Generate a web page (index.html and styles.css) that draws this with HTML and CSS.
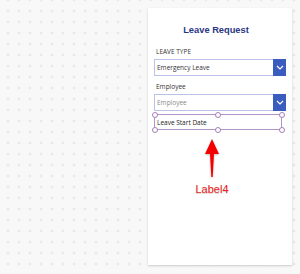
FILE: index.html
```html
<!DOCTYPE html>
<html>
<head>
<meta charset="utf-8">
<link rel="stylesheet" href="styles.css">
</head>
<body>
<div class="card">
  <h1 class="title">Leave Request</h1>
  <div class="label">LEAVE TYPE</div>
  <div class="dropdown">
    <span class="value">Emergency Leave</span>
    <span class="chev"><svg width="8" height="5" viewBox="0 0 8 5"><path d="M1 1 L4 4 L7 1" fill="none" stroke="#fff" stroke-width="1.2"/></svg></span>
  </div>
  <div class="label label-2">Employee</div>
  <div class="dropdown">
    <span class="value placeholder">Employee</span>
    <span class="chev"><svg width="8" height="5" viewBox="0 0 8 5"><path d="M1 1 L4 4 L7 1" fill="none" stroke="#fff" stroke-width="1.2"/></svg></span>
  </div>
  <div class="selected">
    <span class="sel-text">Leave Start Date</span>
    <i class="h tl"></i><i class="h tm"></i><i class="h tr"></i>
    <i class="h bl"></i><i class="h bm"></i><i class="h br"></i>
  </div>
  <div class="annot">
    <svg class="arrow" width="16" height="40" viewBox="0 0 16 40">
      <path d="M8 0 L15 15 L10 15 L8.7 38 L7.3 38 L6 15 L1 15 Z" fill="#f40000"/>
    </svg>
    <div class="annot-text">Label4</div>
  </div>
</div>
</body>
</html>
```
FILE: styles.css
```css
html, body { margin: 0; padding: 0; }
body {
  width: 300px;
  height: 274px;
  overflow: hidden;
  background-color: #f8f8f8;
  background-image: radial-gradient(circle, #dcdcdc 0.8px, transparent 1.3px);
  background-size: 11px 11px;
  background-position: 2.5px -5.5px;
  padding: 8px 0 0 148px;
  box-sizing: border-box;
  font-family: "Open Sans", "Noto Sans", sans-serif;
}
.card {
  width: 144px;
  height: 257px;
  background: #fff;
  box-shadow: 0 1px 2px rgba(0,0,0,0.18);
  padding: 0 6px;
  box-sizing: border-box;
  display: flex;
  flex-direction: column;
}
.title {
  margin: 16px 0 0;
  font-family: "Liberation Sans", Arial, sans-serif;
  font-size: 9.3px;
  font-weight: bold;
  color: #2a3784;
  text-align: center;
  line-height: 12px;
  padding-right: 8px;
}
.label {
  margin-top: 11px;
  font-size: 6.5px;
  line-height: 9px;
  color: #333;
  padding-left: 2px;
}
.label-2 { margin-top: 6px; }
.dropdown {
  margin-top: 3px;
  height: 17px;
  border: 1px solid #b9c3e6;
  box-sizing: border-box;
  display: flex;
  align-items: center;
  justify-content: space-between;
  width: 132px;
}
.value {
  font-size: 6.5px;
  color: #333;
  padding-left: 2px;
}
.placeholder { color: #8a8a8a; }
.chev {
  width: 13px;
  height: 17px;
  margin: -1px -1px -1px 0;
  background: #3a5cbf;
  display: flex;
  align-items: center;
  justify-content: center;
}
.selected {
  position: relative;
  margin-top: 3px;
  width: 128px;
  height: 16px;
  border: 1px solid #b594c7;
  box-sizing: border-box;
  display: flex;
  align-items: center;
}
.sel-text {
  font-size: 6.5px;
  color: #222;
  padding-left: 2px;
}
.h {
  position: absolute;
  width: 4px;
  height: 4px;
  border: 1px solid #a57db9;
  border-radius: 50%;
  background: #fff;
}
.tl { left: -3.5px; top: -3.5px; }
.tm { left: 59.5px; top: -3.5px; }
.tr { right: -3.5px; top: -3.5px; }
.bl { left: -3.5px; bottom: -3.5px; }
.bm { left: 59.5px; bottom: -3.5px; }
.br { right: -3.5px; bottom: -3.5px; }
.annot {
  display: flex;
  flex-direction: column;
  align-items: center;
  margin-top: 9px;
  width: 116px;
}
.arrow {
  display: block;
  filter: drop-shadow(0 1px 1px rgba(0,0,0,0.25));
}
.annot-text {
  margin-top: 4px;
  font-family: "Liberation Sans", Arial, sans-serif;
  font-size: 11px;
  line-height: 13px;
  color: #f02020;
  text-shadow: 0 1px 1px rgba(0,0,0,0.2);
}
```
